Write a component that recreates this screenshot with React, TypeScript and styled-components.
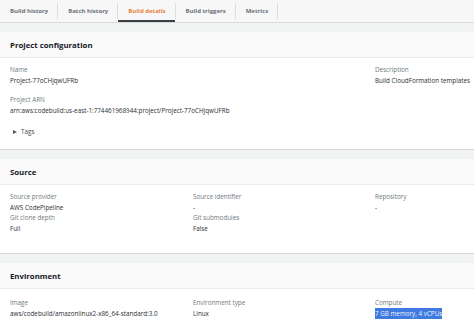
import React from "react";
import styled, { createGlobalStyle } from "styled-components";

const GlobalStyle = createGlobalStyle`
  html, body { margin: 0; padding: 0; background: #f2f3f3; }
  body { font-family: "Open Sans", "Liberation Sans", sans-serif; color: #16191f; }
  * { box-sizing: border-box; }
`;

const Page = styled.div`
  width: 474px;
  height: 321px;
  overflow: hidden;
  background: #f2f3f3;
  display: flex;
  flex-direction: column;
`;

const TabBar = styled.div`
  display: flex;
  height: 23px;
  background: #f7f7f7;
  border-bottom: 1px solid #d5dbdb;
  padding-top: 3px;
  flex-shrink: 0;
`;

const Tab = styled.div<{ $active?: boolean }>`
  position: relative;
  display: flex;
  align-items: center;
  height: 16px;
  padding: 0 9px 0 10px;
  border-right: 1px solid #dcdfe0;
  font-size: 6px;
  font-weight: 700;
  white-space: nowrap;
  color: ${(p) => (p.$active ? "#e2813f" : "#6b7178")};
  &::after {
    content: "";
    display: ${(p) => (p.$active ? "block" : "none")};
    position: absolute;
    left: 0;
    right: 0;
    bottom: -3px;
    height: 2px;
    background: #3b3f45;
  }
`;

const Stack = styled.div`
  display: flex;
  flex-direction: column;
  gap: 9px;
  padding-top: 9px;
`;

const Card = styled.section`
  background: #ffffff;
  border-bottom: 1px solid #d1d5d6;
`;

const CardHeader = styled.h2`
  margin: 0;
  height: 26px;
  display: flex;
  align-items: center;
  padding: 1px 10px 0;
  background: #fafafa;
  border-bottom: 1px solid #eaeded;
  font-size: 7.8px;
  font-weight: 700;
  color: #16191f;
`;

const CardBody = styled.div<{ $top: number; $bottom: number }>`
  padding: ${(p) => p.$top}px 0 ${(p) => p.$bottom}px 10px;
`;

const Grid = styled.div<{ $rowGap: number }>`
  display: grid;
  grid-template-columns: 183px 182px 1fr;
  row-gap: ${(p) => p.$rowGap}px;
`;

const Field = styled.div<{ $wide?: boolean }>`
  display: flex;
  flex-direction: column;
  white-space: nowrap;
  grid-column: ${(p) => (p.$wide ? "1 / -1" : "auto")};
`;

const Label = styled.div`
  font-size: 6.3px;
  line-height: 10px;
  color: #707a80;
`;

const Value = styled.div`
  font-size: 6.3px;
  line-height: 11px;
  color: #2b2f33;
`;

const Selected = styled.span`
  background: #3f7ae0;
  color: #eef2fb;
  padding: 1px 0;
`;

const Spacer = styled.div``;

const TagsToggle = styled.div`
  display: flex;
  align-items: center;
  gap: 4px;
  margin-top: 11px;
  padding-left: 3px;
  font-size: 6.3px;
  line-height: 10px;
  color: #444a50;
`;

const Caret = styled.span`
  width: 0;
  height: 0;
  border-top: 2.5px solid transparent;
  border-bottom: 2.5px solid transparent;
  border-left: 4px solid #545b64;
`;

const tabs = ["Build history", "Batch history", "Build details", "Build triggers", "Metrics"];

export default function App() {
  return (
    <Page>
      <GlobalStyle />
      <TabBar>
        {tabs.map((t) => (
          <Tab key={t} $active={t === "Build details"}>
            {t}
          </Tab>
        ))}
      </TabBar>
      <Stack>
        <Card>
          <CardHeader>Project configuration</CardHeader>
          <CardBody $top={7} $bottom={12}>
            <Grid $rowGap={9}>
              <Field>
                <Label>Name</Label>
                <Value>Project-77oCHjqwUFRb</Value>
              </Field>
              <Spacer />
              <Field>
                <Label>Description</Label>
                <Value>Build CloudFormation templates</Value>
              </Field>
              <Field $wide>
                <Label>Project ARN</Label>
                <Value>arn:aws:codebuild:us-east-1:774461968944:project/Project-77oCHjqwUFRb</Value>
              </Field>
            </Grid>
            <TagsToggle>
              <Caret />
              Tags
            </TagsToggle>
          </CardBody>
        </Card>
        <Card>
          <CardHeader>Source</CardHeader>
          <CardBody $top={7} $bottom={19}>
            <Grid $rowGap={0}>
              <Field>
                <Label>Source provider</Label>
                <Value>AWS CodePipeline</Value>
              </Field>
              <Field>
                <Label>Source identifier</Label>
                <Value>-</Value>
              </Field>
              <Field>
                <Label>Repository</Label>
                <Value>-</Value>
              </Field>
              <Field>
                <Label>Git clone depth</Label>
                <Value>Full</Value>
              </Field>
              <Field>
                <Label>Git submodules</Label>
                <Value>False</Value>
              </Field>
            </Grid>
          </CardBody>
        </Card>
        <Card>
          <CardHeader>Environment</CardHeader>
          <CardBody $top={9} $bottom={20}>
            <Grid $rowGap={0}>
              <Field>
                <Label>Image</Label>
                <Value>aws/codebuild/amazonlinux2-x86_64-standard:3.0</Value>
              </Field>
              <Field>
                <Label>Environment type</Label>
                <Value>Linux</Value>
              </Field>
              <Field>
                <Label>Compute</Label>
                <Value>
                  <Selected>7 GB memory, 4 vCPUs</Selected>
                </Value>
              </Field>
            </Grid>
          </CardBody>
        </Card>
      </Stack>
    </Page>
  );
}
